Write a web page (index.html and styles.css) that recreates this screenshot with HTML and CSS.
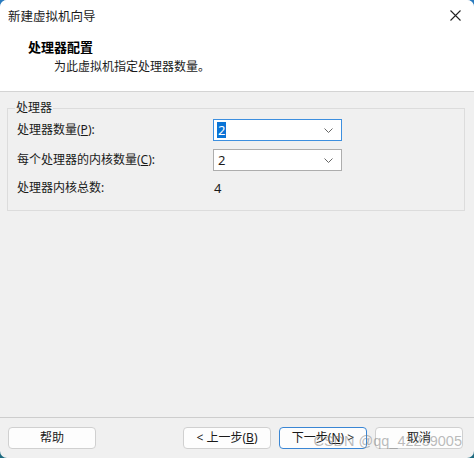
FILE: index.html
```html
<!DOCTYPE html>
<html lang="zh-CN">
<head>
    <meta charset="UTF-8">
    <title>新建虚拟机向导</title>
    <link rel="stylesheet" href="styles.css">
</head>
<body>
    <div class="window">
        <!-- Title bar -->
        <div class="titlebar">
            <span class="title">新建虚拟机向导</span>
            <svg class="close" width="11" height="11" viewBox="0 0 11 11">
                <path d="M0.5 0.5L10.5 10.5M10.5 0.5L0.5 10.5" stroke="#222" stroke-width="1.1" fill="none"/>
            </svg>
        </div>

        <!-- Page header -->
        <div class="header">
            <div class="heading">处理器配置</div>
            <div class="subheading">为此虚拟机指定处理器数量。</div>
        </div>

        <!-- Processor settings -->
        <div class="content">
            <fieldset class="group">
                <legend>处理器</legend>
                <div class="row">
                    <span class="label">处理器数量(<u>P</u>):</span>
                    <div class="combo focused">
                        <span class="selected">2</span>
                        <svg class="chevron" width="9" height="5" viewBox="0 0 9 5"><path d="M0.5 0.5L4.5 4.5L8.5 0.5" stroke="#666" stroke-width="1" fill="none"/></svg>
                    </div>
                </div>
                <div class="row">
                    <span class="label">每个处理器的内核数量(<u>C</u>):</span>
                    <div class="combo">
                        <span class="value">2</span>
                        <svg class="chevron" width="9" height="5" viewBox="0 0 9 5"><path d="M0.5 0.5L4.5 4.5L8.5 0.5" stroke="#666" stroke-width="1" fill="none"/></svg>
                    </div>
                </div>
                <div class="row total">
                    <span class="label">处理器内核总数:</span>
                    <span class="count">4</span>
                </div>
            </fieldset>
        </div>

        <!-- Wizard buttons -->
        <div class="footer">
            <button class="btn">帮助</button>
            <div class="nav">
                <button class="btn">&lt; 上一步(<u>B</u>)</button>
                <button class="btn default">下一步(<u>N</u>) &gt;</button>
                <button class="btn">取消</button>
            </div>
        </div>

        <div class="watermark">CSDN @qq_42239005</div>
    </div>
</body>
</html>
```

FILE: styles.css
```css
/* Global Styles */
* {
    margin: 0;
    padding: 0;
    box-sizing: border-box;
}

body {
    background: linear-gradient(#2a7cc0, #1d6a80);
    width: 474px;
    height: 458px;
    overflow: hidden;
    font-family: 'Noto Sans', 'Noto Sans CJK SC', sans-serif;
    font-size: 12px;
    color: #1a1a1a;
}

.window {
    position: relative;
    width: 474px;
    height: 458px;
    background-color: #f0f0f0;
    border-radius: 7px;
    overflow: hidden;
    display: flex;
    flex-direction: column;
}

/* Title bar */
.titlebar {
    height: 30px;
    background-color: #ffffff;
    display: flex;
    align-items: center;
    justify-content: space-between;
    padding: 3px 13px 0 8px;
}

.title {
    font-size: 12.5px;
    line-height: 16px;
    color: #1a1a1a;
}

.close {
    margin-top: -2px;
}

/* Header */
.header {
    height: 62px;
    background-color: #ffffff;
    border-bottom: 1px solid #d4d4d4;
    padding-top: 9px;
}

.heading {
    font-size: 13px;
    font-weight: bold;
    line-height: 16px;
    padding-left: 28px;
    color: #000;
}

.subheading {
    line-height: 16px;
    margin-top: 4px;
    padding-left: 54px;
    color: #1a1a1a;
}

/* Content */
.content {
    flex: 1;
}

.group {
    margin: 8px 9px 0 7px;
    border: 1px solid #dcdcdc;
    padding: 3px 0 11px 9px;
}

.group legend {
    line-height: 16px;
    padding: 0 1px;
    margin-left: -2px;
    color: #1a1a1a;
}

.row {
    display: grid;
    grid-template-columns: 196px 129px;
    align-items: center;
    height: 22px;
    margin-bottom: 8px;
}

.row.total {
    margin-bottom: 0;
    margin-top: -2px;
}

.label {
    line-height: 16px;
}

.combo {
    height: 22px;
    background-color: #ffffff;
    border: 1px solid #adadad;
    display: flex;
    align-items: center;
    justify-content: space-between;
    padding: 0 8px 0 3px;
}

.combo.focused {
    border-color: #3d8fdf;
}

.combo .value {
    padding-left: 1px;
    line-height: 16px;
    font-size: 13px;
}

.combo .selected {
    background-color: #0a74d6;
    color: #ffffff;
    line-height: 16px;
    font-size: 13px;
    padding: 0 1px;
}

.count {
    padding-left: 1px;
    font-size: 13px;
    line-height: 16px;
}

/* Footer */
.footer {
    height: 41px;
    border-top: 1px solid #cdcdcd;
    display: flex;
    justify-content: space-between;
    padding: 9px 11px 0 8px;
}

.nav {
    display: flex;
    gap: 8px;
}

.btn {
    width: 88px;
    height: 22px;
    background-color: #fdfdfd;
    border: 1px solid #d0d0d0;
    border-radius: 4px;
    font-family: 'Noto Sans', 'Noto Sans CJK SC', sans-serif;
    font-size: 12px;
    line-height: 16px;
    color: #1a1a1a;
}

.btn.default {
    border-color: #3a86d4;
}

/* CSDN watermark */
.watermark {
    position: absolute;
    right: 12px;
    bottom: 9px;
    font-family: 'Liberation Sans', sans-serif;
    font-size: 14.5px;
    line-height: 16px;
    color: rgba(130, 130, 130, 0.55);
}
```
